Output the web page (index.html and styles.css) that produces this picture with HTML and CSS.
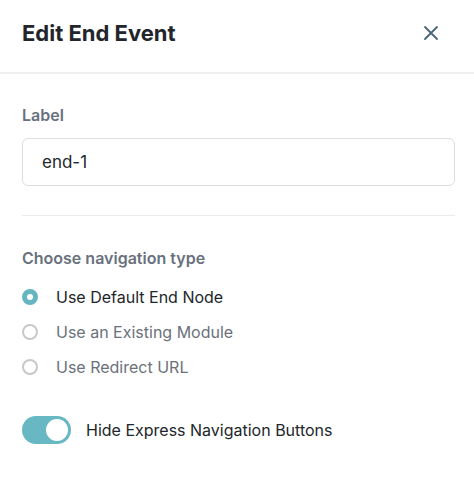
FILE: index.html
```html
<!DOCTYPE html>
<html>
<head>
<meta charset="utf-8">
<link rel="stylesheet" href="styles.css">
</head>
<body>
<div class="panel">
  <header class="header">
    <h1 class="title">Edit End Event</h1>
    <button class="close" aria-label="Close">
      <svg width="16" height="16" viewBox="0 0 16 16"><path d="M2 2 L14 14 M14 2 L2 14" stroke="#4a6478" stroke-width="1.8" stroke-linecap="round" fill="none"/></svg>
    </button>
  </header>
  <section class="body">
    <div class="field">
      <label class="field-label">Label</label>
      <div class="input">end-1</div>
    </div>
    <hr class="divider">
    <div class="group">
      <div class="group-label">Choose navigation type</div>
      <div class="radios">
        <div class="radio-row checked"><span class="radio"></span><span class="radio-text">Use Default End Node</span></div>
        <div class="radio-row"><span class="radio"></span><span class="radio-text">Use an Existing Module</span></div>
        <div class="radio-row"><span class="radio"></span><span class="radio-text">Use Redirect URL</span></div>
      </div>
    </div>
    <div class="toggle-row">
      <span class="toggle"><span class="knob"></span></span>
      <span class="toggle-text">Hide Express Navigation Buttons</span>
    </div>
  </section>
</div>
</body>
</html>
```
FILE: styles.css
```css
* { box-sizing: border-box; }
html, body { margin: 0; padding: 0; background: #fff; }
body { font-family: Inter, "Noto Sans", sans-serif; color: #1f2329; }
.panel { width: 474px; height: 478px; }
.header {
  height: 74px;
  border-bottom: 2px solid #f0f0f1;
  display: flex;
  align-items: center;
  justify-content: space-between;
  padding: 0 35px 7px 22px;
}
.title { margin: 0; font-size: 22px; font-weight: 700; color: #22262b; line-height: 28px; }
.close { border: 0; background: none; padding: 0; width: 16px; height: 16px; display: flex; }
.body { padding: 0 19px 0 22px; }
.field { padding-top: 31px; }
.field-label { display: block; font-size: 16px; font-weight: 600; color: #69717d; line-height: 20px; }
.input {
  margin-top: 13px;
  height: 48px;
  border: 1.5px solid #dcdde0;
  border-radius: 6px;
  padding: 0 19px;
  display: flex; align-items: center;
  font-size: 17px; color: #22262b;
}
.divider { border: 0; border-top: 1.5px solid #ebebed; margin: 29px 0 0; }
.group { padding-top: 32px; }
.group-label { font-size: 16px; font-weight: 600; color: #69717d; line-height: 20px; }
.radios { margin-top: 19px; display: flex; flex-direction: column; gap: 15px; }
.radio-row { display: flex; align-items: center; height: 20px; }
.radio {
  width: 16px; height: 16px; border-radius: 50%;
  border: 2px solid #c6c8cc;
  margin-right: 18px;
  flex: none;
}
.radio-row.checked .radio { border: 5px solid #65b6c0; background: #fff; }
.radio-text { font-size: 16px; color: #6b717b; }
.radio-row.checked .radio-text { color: #22262b; }
.toggle-row { display: flex; align-items: center; margin-top: 39px; }
.toggle {
  width: 49px; height: 28px; border-radius: 14px; background: #67b8c2;
  display: flex; align-items: center; justify-content: flex-end; padding-right: 3px;
  margin-right: 15px; flex: none;
}
.knob { width: 22px; height: 22px; border-radius: 50%; background: #fff; }
.toggle-text { font-size: 16px; color: #22262b; }
```
